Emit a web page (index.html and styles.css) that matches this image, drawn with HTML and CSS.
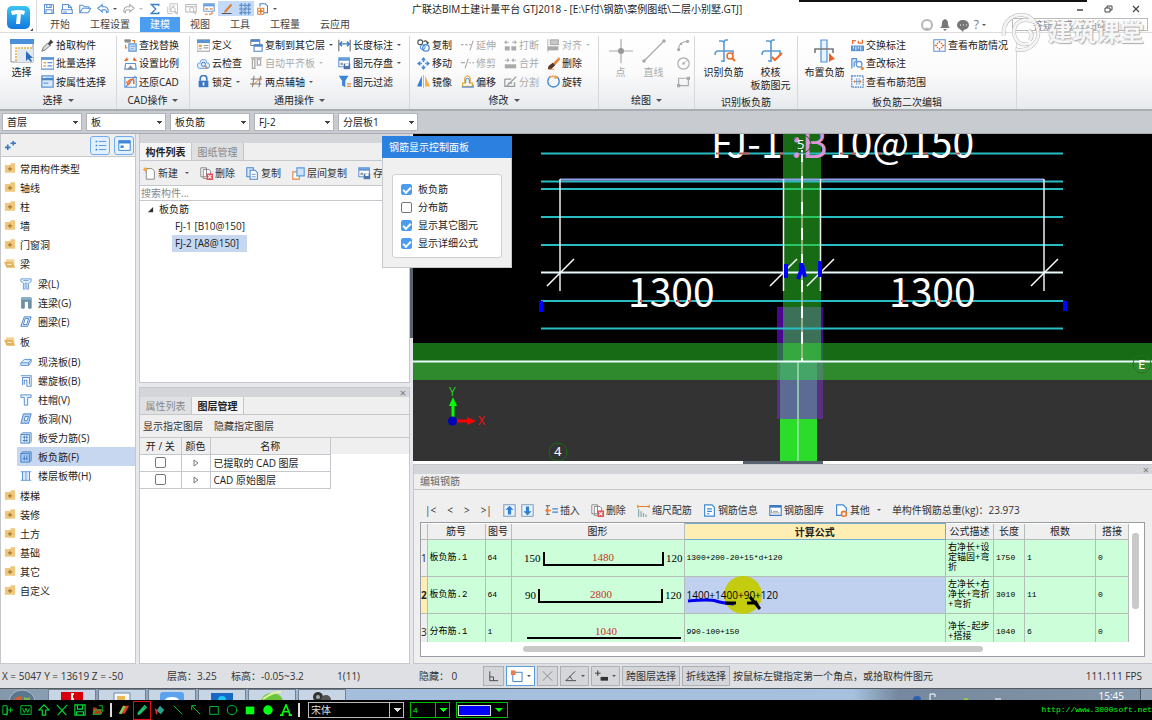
FILE: index.html
```html
<!DOCTYPE html>
<html lang="zh-CN">
<head>
<meta charset="utf-8">
<meta name="viewport" content="width=device-width, initial-scale=1">
<title>广联达BIM土建计量平台 GTJ2018</title>
<link rel="stylesheet" href="styles.css">
</head>
<body>
<!-- icon sprite -->
<svg class="sprite" aria-hidden="true">
	<symbol id="save" viewBox="0 0 16 16"><path d="M2 2h11l1 1v11H2zM5 2v4h6V2M4 14V9h8v5M9 3v2" fill="none" stroke="#5b93d6" stroke-width="1.4"/></symbol>
	<symbol id="saveas" viewBox="0 0 16 16"><path d="M2 9V2h8l4 4v3M10 2v4h4M1 9h14v5H1zM3 12h5" fill="none" stroke="#5b93d6" stroke-width="1.4"/></symbol>
	<symbol id="open" viewBox="0 0 16 16"><path d="M1 13V3h4l2 2h6v3M1 13l4-6h11l-4 6z" fill="none" stroke="#5b93d6" stroke-width="1.4"/></symbol>
	<symbol id="undo" viewBox="0 0 16 16"><path d="M1 7l6-5v3h4q4 1 4 7l-2 1q0-4-3-4H7v3z" fill="none" stroke="#4a8fd8" stroke-width="1.4"/></symbol>
	<symbol id="redo" viewBox="0 0 16 16"><path d="M15 7L9 2v3H5Q1 6 1 12l2 1q0-4 3-4h3v3z" fill="none" stroke="#aaa" stroke-width="1.4"/></symbol>
	<symbol id="sum" viewBox="0 0 16 16"><path d="M13 4V2H3l6 6-6 6h10v-2" fill="none" stroke="#3b7fcb" stroke-width="1.8"/></symbol>
	<symbol id="findgray" viewBox="0 0 16 16"><path d="M4 12V1h10v12h-4M1 5v9h6M6 4h5" fill="none" stroke="#bbb" stroke-width="1.2"/><circle cx="8" cy="9" r="3" fill="none" stroke="#bbb" stroke-width="1.3"/><path d="M10 11l4 4" stroke="#bbb" stroke-width="1.5"/></symbol>
	<symbol id="tblgray" viewBox="0 0 16 16"><path d="M1 2h14v10H1zM1 5h14" fill="none" stroke="#bbb" stroke-width="1.4"/><circle cx="9" cy="9" r="3" fill="#fff" stroke="#bbb" stroke-width="1.3"/><path d="M11 11l4 4" stroke="#bbb" stroke-width="1.5"/></symbol>
	<symbol id="report" viewBox="0 0 16 16"><path d="M1 1h14v10H1z" fill="#fff" stroke="#6aa0dc" stroke-width="1.4"/><path d="M1 3h14" stroke="#6aa0dc" stroke-width="3"/><path d="M3 8h4M9 8h4M3 15h3M8 15h3M12 12v3" stroke="#e9935a" stroke-width="2"/></symbol>
	<symbol id="pen" viewBox="0 0 16 16"><path d="M13 1L5 10l-1 3 3-1 8-9z" fill="#e07b28"/><path d="M1 14h13" stroke="#555" stroke-width="1.4"/></symbol>
	<symbol id="grid" viewBox="0 0 16 16"><path d="M0 3h16M0 8h16M0 13h16M3 0v16M8 0v16M13 0v16" stroke="#4f80bc" stroke-width="1.2"/><path d="M1 15L15 1" stroke="#4f80bc" stroke-width=".8"/></symbol>
	<symbol id="docplus" viewBox="0 0 16 16"><path d="M4 5V1h7l3 3v9H9" fill="none" stroke="#4a7fc0" stroke-width="1.4"/><path d="M1 7h8v8H1z" fill="#fff" stroke="#e07b28" stroke-width="1.4"/><path d="M5 8v6M2 11h6" stroke="#e07b28" stroke-width="2"/></symbol>
	<symbol id="pick" viewBox="0 0 16 16"><path d="M1 15l2-5 5-5 3 3-5 5z" fill="#d7dadd" stroke="#777" stroke-width="1.2"/><path d="M9 5l3 3M10 5l2-3 2 2-3 2z" fill="#333" stroke="#444" stroke-width="1.6"/></symbol>
	<symbol id="batch" viewBox="0 0 16 16"><path d="M0 1h16v14H0z" fill="#fff" stroke="#5a93d6" stroke-width="1.5"/><path d="M0 2h16" stroke="#5a93d6" stroke-width="3"/><path d="M3 7h3M3 11h3" stroke="#eea33b" stroke-width="2"/><path d="M8 7h6M8 11h6" stroke="#5a93d6" stroke-width="1.4"/></symbol>
	<symbol id="prop" viewBox="0 0 16 16"><path d="M1 1h14v14H1z" fill="#d9e9fb" stroke="#5a93d6" stroke-width="1.5"/><path d="M1 5h14" stroke="#4a86cc" stroke-width="3"/><path d="M3 10h6" stroke="#5a93d6" stroke-width="1.4"/><path d="M4 2v2" stroke="#fff"/></symbol>
	<symbol id="swap" viewBox="0 0 16 16"><path d="M1 1h7v2H1zM1 4h7" fill="#888" stroke="#888"/><path d="M10 2h3v3M2 7v4h2" fill="none" stroke="#e07b28" stroke-width="1.4"/><path d="M6 6h9v9H6z" fill="#cfe2f7" stroke="#5a93d6" stroke-width="1.4"/><path d="M8 9h6M8 12h4" stroke="#5a93d6"/></symbol>
	<symbol id="scale" viewBox="0 0 16 16"><path d="M4 0v5H0zM12 0v5h4z" fill="#ec6a2a"/><path d="M2 3h3M11 3h3" stroke="#ec6a2a" stroke-width="2"/><path d="M2 8h12l1 7H1z" fill="#fff" stroke="#5a93d6" stroke-width="1.4"/><path d="M4 15l4-5 4 5" fill="#888"/></symbol>
	<symbol id="restore" viewBox="0 0 16 16"><path d="M1 2v13h14V2M0 3h16M2 15L14 1" fill="none" stroke="#5a93d6" stroke-width="1.3"/><path d="M5 9q2-5 7-3v5M3 8l2 4 3-3" fill="none" stroke="#ec6a2a" stroke-width="1.8"/></symbol>
	<symbol id="define" viewBox="0 0 16 16"><path d="M0 1h16v14H0z" fill="#fff" stroke="#999" stroke-width="1.2"/><path d="M0 3h16" stroke="#5a93d6" stroke-width="4"/><path d="M2 7h4v3H2z" fill="#f0a04a"/><path d="M8 8h6M8 11h6M2 12h4" stroke="#999" stroke-width="1.4"/></symbol>
	<symbol id="cloud" viewBox="0 0 16 16"><path d="M4 14a3.5 3.5 0 010-7 4 4 0 018 0 3.500 3.500 0 010 7z" fill="#e4f0fd" stroke="#7dabdf" stroke-width="1.3"/><circle cx="8" cy="9" r="2.500" fill="none" stroke="#3b78c2" stroke-width="1.2"/><path d="M10 11l3 3" stroke="#e07b28" stroke-width="1.6"/></symbol>
	<symbol id="lock" viewBox="0 0 16 16"><path d="M4 7V4a4 3.500 0 018 0v3" fill="none" stroke="#3b78c2" stroke-width="2"/><path d="M2 7h12v8H2z" fill="#3b78c2"/><path d="M8 9v4" stroke="#fff" stroke-width="2"/></symbol>
	<symbol id="layers" viewBox="0 0 16 16"><path d="M1 1h11v7H1z" fill="#fff" stroke="#777" stroke-width="1.2"/><path d="M1 2h11" stroke="#4a86cc" stroke-width="3"/><path d="M5 7h10v8H5z" fill="#fff" stroke="#4a86cc" stroke-width="1.3"/><path d="M5 8h10" stroke="#4a86cc" stroke-width="3"/></symbol>
	<symbol id="flush" viewBox="0 0 16 16"><path d="M1 1h14M3 3h3v11H3zM9 3h4v7H9z" fill="none" stroke="#aaa" stroke-width="1.6"/></symbol>
	<symbol id="axis" viewBox="0 0 16 16"><path d="M5 1L3 15M13 1l-2 14M1 5h14M0 11h14" stroke="#777" stroke-width="1.2"/><path d="M3 13L14 3" stroke="#e07b28" stroke-width="1.2"/></symbol>
	<symbol id="length" viewBox="0 0 16 16"><path d="M1 1v14M15 1v14" stroke="#777" stroke-width="1.5"/><path d="M3 6h10M5 3L2 6l3 3M11 3l3 3-3 3" fill="none" stroke="#3b78c2" stroke-width="1.6"/></symbol>
	<symbol id="store" viewBox="0 0 16 16"><path d="M1 1h13v11H1z" fill="#fff" stroke="#5a93d6" stroke-width="1.3"/><path d="M1 3h13" stroke="#5a93d6" stroke-width="3"/><path d="M3 7h3v3H3z" fill="#999"/><path d="M7 8h8v7H7z" fill="#4f75a8"/><path d="M9 8h4v3H9z" fill="#fff"/></symbol>
	<symbol id="filter" viewBox="0 0 16 16"><path d="M1 1h12L9 7v8l-4-2V7z" fill="#3b86d6"/><path d="M11 11h5M11 14h5" stroke="#eb8a35" stroke-width="1.6"/></symbol>
	<symbol id="copyobj" viewBox="0 0 16 16"><circle cx="4" cy="4" r="3" fill="none" stroke="#555" stroke-width="1.4"/><path d="M8 3q4-2 5 2" fill="none" stroke="#444" stroke-width="1.4"/><path d="M11 4l2 3 2-3z" fill="#444"/><circle cx="11" cy="11" r="4" fill="none" stroke="#3b86d6" stroke-width="1.5"/><circle cx="7" cy="10" r="3" fill="none" stroke="#3b86d6" stroke-width="1.2"/></symbol>
	<symbol id="move" viewBox="0 0 16 16"><path d="M8 0l3 4H5zM8 16l3-4H5zM0 8l4-3v6zM16 8l-4-3v6z" fill="#3b86d6"/><path d="M8 4v2M8 10v2M4 8h2M10 8h2" stroke="#3b86d6" stroke-width="2"/></symbol>
	<symbol id="mirror" viewBox="0 0 16 16"><path d="M6 1v13H0z" fill="#2f7fd4"/><path d="M10 1v13h6z" fill="#f6b13e"/><path d="M8 0v16" stroke="#aaa"/></symbol>
	<symbol id="extend" viewBox="0 0 16 16"><path d="M0 7h3M5 7h3M10 7h2M11 14l4-12" stroke="#aaa" stroke-width="1.4"/></symbol>
	<symbol id="trim" viewBox="0 0 16 16"><path d="M0 7h5M10 7h2M14 7h2M5 14L9 2" stroke="#aaa" stroke-width="1.4"/></symbol>
	<symbol id="offset" viewBox="0 0 16 16"><path d="M2 14v-4h3q-2-8 3-9 5 1 3 9h3v4z" fill="#fff" stroke="#e2a634" stroke-width="1.4"/><path d="M1 15h14v-3M6 10q-1-6 2-6t2 6" fill="none" stroke="#5a93d6" stroke-width="1.4"/></symbol>
	<symbol id="breakit" viewBox="0 0 16 16"><path d="M1 9h6v5H1zM9 9h6v5H9z" fill="#aaa"/><path d="M1 4h5M10 4h5M3 2L1 4l2 2M13 2l2 2-2 2" fill="none" stroke="#aaa" stroke-width="1.3"/></symbol>
	<symbol id="merge" viewBox="0 0 16 16"><path d="M1 9h14v5H1z" fill="#aaa"/><path d="M1 4h5M10 4h5M4 2l2 2-2 2M12 2l-2 2 2 2" fill="none" stroke="#aaa" stroke-width="1.3"/></symbol>
	<symbol id="split" viewBox="0 0 16 16"><path d="M1 5h8M1 5v9h12V9M3 14l12-12M5 10h5" fill="none" stroke="#999" stroke-width="1.500"/></symbol>
	<symbol id="align" viewBox="0 0 16 16"><path d="M4 1h10v6H4z" fill="#c8c8c8" stroke="#999"/><path d="M1 9h13v5H1z" fill="#aaa"/><path d="M1 0v16" stroke="#aaa"/></symbol>
	<symbol id="eraser" viewBox="0 0 16 16"><path d="M15 0L7 8l2 3 7-8z" fill="#e9812c"/><path d="M7 7l3 3-5 5H1l1-4z" fill="#553526"/><path d="M3 15h6" stroke="#e9812c"/></symbol>
	<symbol id="rotate" viewBox="0 0 16 16"><path d="M12 2a7 7 0 11-8 0" fill="none" stroke="#3b86d6" stroke-width="1.6"/><path d="M3 3q4-3 8 0" fill="none" stroke="#f0a04a" stroke-width="1.8"/><path d="M10 0l4 4-5 1z" fill="#f0a04a"/></symbol>
	<symbol id="arc" viewBox="0 0 16 16"><path d="M2 13Q2 3 13 3" fill="none" stroke="#aaa" stroke-width="1.3"/><circle cx="2" cy="13" r="2" fill="#aaa"/><circle cx="13" cy="3" r="2" fill="#aaa"/><circle cx="5" cy="6" r="1.500" fill="#aaa"/></symbol>
	<symbol id="circle" viewBox="0 0 16 16"><circle cx="8" cy="8" r="7" fill="none" stroke="#aaa" stroke-width="1.400"/><circle cx="8" cy="8" r="1.500" fill="#aaa"/><path d="M8 8l5-4" stroke="#aaa"/></symbol>
	<symbol id="rect" viewBox="0 0 16 16"><path d="M2 4h12v9H2z" fill="none" stroke="#aaa" stroke-width="1.400"/><path d="M0 11h4v4H0zM12 2h4v4h-4z" fill="#aaa"/></symbol>
	<symbol id="bigsel" viewBox="0 0 24 24"><path d="M1 1h22v22H1z" fill="#fff" stroke="#8f9499"/><path d="M0 0h24v5H0z" fill="#4a90da"/><path d="M6 22V9h17" fill="none" stroke="#e9a63e" stroke-width="1.500" stroke-dasharray="2 1"/><path d="M7 10h16v13H7z" fill="#e0e9f4"/><path d="M16 12v10l2-2 3 3 1-1-2-3h3z" fill="#2e6db8"/></symbol>
	<symbol id="point" viewBox="0 0 24 24"><path d="M12 0v24M0 12h24" stroke="#aaa" stroke-width="1.200"/><circle cx="12" cy="12" r="3" fill="#999"/></symbol>
	<symbol id="line" viewBox="0 0 24 24"><path d="M2 22L22 2" stroke="#aaa" stroke-width="1.200"/><circle cx="2" cy="22" r="1.800" fill="#aaa"/><circle cx="22" cy="2" r="1.800" fill="#aaa"/></symbol>
	<symbol id="recog" viewBox="0 0 24 24"><path d="M7 2h3q2 0 2 3v18M12 22h-3M16 1h-2q-2 0-2 3M3 16q0-4 3-4h15v3" fill="none" stroke="#5a9ad8" stroke-width="1.600"/><circle cx="18" cy="17" r="3" fill="#fff" stroke="#ec6a2a" stroke-width="1.600"/><path d="M20 19l3 3" stroke="#ec6a2a" stroke-width="2"/></symbol>
	<symbol id="verify" viewBox="0 0 24 24"><path d="M7 2h3q2 0 2 3v18M12 22h-3M16 1h-2q-2 0-2 3M3 16q0-4 3-4h15v3" fill="none" stroke="#5a9ad8" stroke-width="1.600"/><path d="M13 18l3 3 7-7" fill="none" stroke="#ec6a2a" stroke-width="2"/></symbol>
	<symbol id="place" viewBox="0 0 24 24"><path d="M8 1h6v22H8z" fill="#e6f2fe" stroke="#4d94dc" stroke-width="1.200"/><path d="M2 14v-4h18v4" fill="none" stroke="#777" stroke-width="1.600"/><path d="M16 14l6 6-3 1-3 2z" fill="#ec5f22"/></symbol>
	<symbol id="exch" viewBox="0 0 16 16"><path d="M2 6V2h4M9 2v3h5V1" fill="none" stroke="#ec6a2a" stroke-width="1.500"/><path d="M0 8h16v7H0z" fill="#5a93d6"/><path d="M3 9v3M6 9v5M9 9v3M12 9v5" stroke="#fff"/></symbol>
	<symbol id="fixnote" viewBox="0 0 16 16"><path d="M1 14V2h6v3L4 7v5" fill="#cfe2f7" stroke="#5a93d6" stroke-width="1.400"/><circle cx="10" cy="9" r="3.500" fill="#fff" stroke="#5a93d6" stroke-width="1.500"/><circle cx="14" cy="14" r="2" fill="#eb8a35"/></symbol>
	<symbol id="range" viewBox="0 0 16 16"><path d="M1 1h14v14H1z" fill="none" stroke="#3b78c2" stroke-width="1.400" stroke-dasharray="2 1"/><path d="M4 8h8M7 4v8M10 4v8" stroke="#5a93d6"/><path d="M3 8l2-2v4zM13 8l-2-2v4z" fill="#e07b28"/></symbol>
	<symbol id="status" viewBox="0 0 16 16"><path d="M1 1h14v14H1z" fill="#fff" stroke="#5a93d6" stroke-width="1.300"/><path d="M8 2v3M8 11v3M2 8h3M11 8h3M5 5l1 1M11 5l-1 1M5 11l1-1M11 11l-1-1" fill="none" stroke="#ec6a2a" stroke-width="1.800"/></symbol>
	<symbol id="folder" viewBox="0 0 14 12"><path d="M1 2h6l1-2h5v11H1z" fill="#efc880"/><path d="M7 4v5M4.500 6.500h5" stroke="#a8752a" stroke-width="1.300"/></symbol>
	<symbol id="folderopen" viewBox="0 0 14 12"><path d="M2 1h10v8H4z" fill="#f2d79d"/><path d="M0 4h10l3 7H3z" fill="#e5b25a"/><path d="M4 7h5" stroke="#fff"/></symbol>
	<symbol id="beam" viewBox="0 0 14 14"><path d="M1 1h12v3l-3 2v7H8V6H6v7H4V6L1 4z" fill="#e8f3fe" stroke="#5a93d6"/><path d="M4 3h6" stroke="#5a93d6"/></symbol>
	<symbol id="lbeam" viewBox="0 0 14 14"><path d="M2 1h11v12h-3V5H5v8H2z" fill="#6d93ad" stroke="#5e7f98"/><path d="M2 2h11" stroke="#8db6d2" stroke-width="2"/></symbol>
	<symbol id="ring" viewBox="0 0 14 14"><path fill-rule="evenodd" d="M5 1h8L9 12H1zM6 3h4l-2 7H4z" fill="#dcecfc" stroke="#3b78c2"/></symbol>
	<symbol id="slab" viewBox="0 0 14 14"><path d="M1 8l4-4h8l-3 4zM1 8v3h9V8M10 11l3-4V4" fill="#dcecfc" stroke="#4a86cc"/></symbol>
	<symbol id="spiral" viewBox="0 0 14 14"><path d="M1 1h12v12H8V6H5v5M3 12V3h8v8" fill="none" stroke="#5a93d6" stroke-width="1.200"/></symbol>
	<symbol id="cap" viewBox="0 0 14 14"><path d="M1 1h12v3H9v9H5V4H1z" fill="#e8f3fe" stroke="#4a86cc"/></symbol>
	<symbol id="hole" viewBox="0 0 14 14"><path d="M4 1h9l-3 11H1z" fill="#b9d6f5" stroke="#3b78c2"/><path d="M6 4h4L8 9H5z" fill="#fff" stroke="#3b78c2"/></symbol>
	<symbol id="rebar" viewBox="0 0 14 14"><path d="M1 3l2-2h10v10l-2 2H1zM1 3h10v10M3 6h6M3 10h6M5 4v8M8 4v8" fill="#e8f3fe" stroke="#3b78c2"/></symbol>
	<symbol id="negbar" viewBox="0 0 14 14"><path d="M1 3l2-2h10v10l-2 2H1zM1 3h10v10M3 9h6M5 5v6M8 5v6" fill="#a9cbf3" stroke="#3b78c2"/></symbol>
	<symbol id="band" viewBox="0 0 14 14"><path d="M1 2h12M1 12h12M3 2v10M7 2v10M11 2v10" stroke="#5a93d6" stroke-width="1.300"/><path d="M4 3h2v8H4zM8 3h2v8H8z" fill="#d5e6f9"/></symbol>
	<symbol id="new" viewBox="0 0 16 16"><path d="M4 2h7l3 3v10H4z" fill="#fff" stroke="#888" stroke-width="1.200"/><path d="M3 0v6M0 3h6M1 1l4 4M5 1L1 5" stroke="#f0a53e" stroke-width="1.200"/></symbol>
	<symbol id="del" viewBox="0 0 16 16"><path d="M1 1h7v11H1zM4 3h7l2 2v9H4z" fill="#fff" stroke="#888" stroke-width="1.200"/><path d="M8 8h8v8H8z" fill="#e2515a"/><path d="M10 10l4 4M14 10l-4 4" stroke="#fff" stroke-width="1.400"/></symbol>
	<symbol id="copy" viewBox="0 0 16 16"><path d="M1 1h8v11H1z" fill="#d9e9fb" stroke="#4a86cc" stroke-width="1.300"/><path d="M5 4h6l3 3v8H5z" fill="#fff" stroke="#4a86cc" stroke-width="1.300"/><path d="M7 9h5M7 12h5" stroke="#4a86cc"/></symbol>
	<symbol id="floorcopy" viewBox="0 0 16 16"><path d="M1 6h8v9H1z" fill="#fff" stroke="#e0854a" stroke-width="1.400"/><path d="M6 1h9v10H6z" fill="#cfe4fb" stroke="#5a9ade" stroke-width="1.400"/></symbol>
	<symbol id="up" viewBox="0 0 16 16"><path d="M1 1h14v14H1z" fill="#eef5fd" stroke="#7a9cc0" stroke-width="1.300"/><path d="M8 2l5 5h-3v6H6V7H3z" fill="#2f7fd4"/></symbol>
	<symbol id="down" viewBox="0 0 16 16"><path d="M1 1h14v14H1z" fill="#eef5fd" stroke="#7a9cc0" stroke-width="1.300"/><path d="M8 14l5-5h-3V3H6v6H3z" fill="#2f7fd4"/></symbol>
	<symbol id="insert" viewBox="0 0 16 16"><path d="M1 2h5M1 13h5M3 2v3M3 10v3" stroke="#777" stroke-width="1.300"/><path d="M0 8l4-4v3h3v2H4v3z" fill="#ec7a2a"/><path d="M9 6h7M9 10h7" stroke="#3b86d6" stroke-width="1.600"/></symbol>
	<symbol id="ruler" viewBox="0 0 16 16"><path d="M1 1v4M1 3h14M15 1v4" stroke="#ec7a2a" stroke-width="1.300"/><path d="M2 6v10M5 9v7M8 11v5M11 13v3" stroke="#8aa" stroke-width="1.500"/></symbol>
	<symbol id="info" viewBox="0 0 16 16"><path d="M2 1h9l3 3v11H2z" fill="#fff" stroke="#3b86d6" stroke-width="1.400"/><path d="M5 6h6M5 9h6M5 12h3" stroke="#3b86d6" stroke-width="1.500"/></symbol>
	<symbol id="lib" viewBox="0 0 16 16"><path d="M1 2h14v12H1z" fill="#fff" stroke="#3b78c2" stroke-width="1.300"/><path d="M1 3h14" stroke="#3b78c2" stroke-width="3"/><path d="M3 7v4h10M5 9h6" fill="none" stroke="#888"/></symbol>
	<symbol id="other" viewBox="0 0 16 16"><path d="M2 1h8l4 4v9H2z" fill="#fff" stroke="#3b86d6" stroke-width="1.400"/><circle cx="11" cy="12" r="3" fill="#fff" stroke="#ec7a2a" stroke-width="2"/></symbol>
</svg>

<header class="top">
	<button class="logo" aria-label="菜单">
		<svg viewBox="0 0 36 32">
			<defs><linearGradient id="lg" x1="0" y1="0" x2="0" y2="1"><stop offset="0" stop-color="#3cc4f5"/><stop offset="1" stop-color="#1278dc"/></linearGradient></defs>
			<rect x="7" y="6" width="23" height="23" rx="5" fill="url(#lg)"/>
			<path d="M11 11q8-2 14 0l-1 4-3-1-1 10h-4l1-10-5 1z" fill="#fff"/>
			<path d="M30 31h3v-3z" fill="#555"/>
		</svg>
	</button>
	<div class="topmain">
		<div class="titlerow">
			<div class="quick">
				<button aria-label="保存"><svg><use href="#save"/></svg></button>
				<button aria-label="另存"><svg><use href="#saveas"/></svg></button>
				<button aria-label="打开"><svg><use href="#open"/></svg></button>
				<button aria-label="撤销" class="drop"><svg><use href="#undo"/></svg></button>
				<button aria-label="恢复" class="drop dis"><svg><use href="#redo"/></svg></button>
				<button aria-label="汇总"><svg><use href="#sum"/></svg></button>
				<button aria-label="查找"><svg><use href="#findgray"/></svg></button>
				<button aria-label="查看"><svg><use href="#tblgray"/></svg></button>
				<button aria-label="报表"><svg><use href="#report"/></svg></button>
				<button aria-label="绘制" class="on"><svg><use href="#pen"/></svg></button>
				<button aria-label="轴网" class="on"><svg><use href="#grid"/></svg></button>
				<button aria-label="新增" class="drop"><svg><use href="#docplus"/></svg></button>
			</div>
			<h1>广联达BIM土建计量平台 GTJ2018 - [E:\F付\钢筋\案例图纸\二层小别墅.GTJ]</h1>
			<div class="winbtns">
				<button aria-label="最小化"><svg viewBox="0 0 10 10"><path d="M2 6h6" stroke="#444" stroke-width="1.500"/></svg></button>
				<button aria-label="还原"><svg viewBox="0 0 10 10"><path d="M2 4h5v4H2zM4 4V2h5v4H7" fill="none" stroke="#444"/></svg></button>
				<button aria-label="关闭"><svg viewBox="0 0 10 10"><path d="M2 2l6 6M8 2L2 8" stroke="#444" stroke-width="1.200"/></svg></button>
			</div>
		</div>
		<div class="tabrow">
			<nav class="menu">
				<a href="#">开始</a><a href="#">工程设置</a><a href="#" class="active">建模</a><a href="#">视图</a><a href="#">工具</a><a href="#">工程量</a><a href="#">云应用</a>
			</nav>
			<div class="helpers">
				<svg viewBox="0 0 14 14"><circle cx="7" cy="7" r="5" fill="none" stroke="#b5b5b5" stroke-width="2"/><path d="M3 12q4-5 8 0z" fill="#b5b5b5"/></svg>
				<svg viewBox="0 0 14 14"><path d="M2 10q2-1 2-5 0-3 3-4 3 1 3 4 0 4 2 5zM5 11h4l-2 2z" fill="#777"/></svg>
				<svg viewBox="0 0 14 14"><ellipse cx="7" cy="7" rx="6" ry="5" fill="#777"/><path d="M4 11l3 3 1-3z" fill="#777"/><path d="M4 7h1M7 7h1M10 7h1" stroke="#fff"/></svg>
				<button class="help drop">?</button>
				<input type="text" class="search" aria-label="搜索" placeholder="答疑解惑/搜功能">
			</div>
		</div>
	</div>
	<div class="edge"></div>
	<div class="mark">
		<svg viewBox="0 0 44 44"><path d="M37 12Q28 1 16 5 2 11 4 26M37 12Q24 6 17 14q-5 8 0 16 5 7 13 4M30 20q6 5 1 11M38 14q5 12-2 20-8 9-20 6" fill="none" stroke="#b5b5b5" stroke-width="4"/><path d="M37 12Q28 1 16 5 2 11 4 26M37 12Q24 6 17 14q-5 8 0 16 5 7 13 4M30 20q6 5 1 11M38 14q5 12-2 20-8 9-20 6" fill="none" stroke="#f4f4f4" stroke-width="3"/></svg>
		<span>建筑课堂</span>
	</div>
</header>

<section class="ribbon">
	<div class="group g-select">
		<div class="body">
			<button class="big"><svg><use href="#bigsel"/></svg><span>选择</span></button>
			<div class="tools">
				<button><svg><use href="#pick"/></svg>拾取构件</button>
				<button><svg><use href="#batch"/></svg>批量选择</button>
				<button><svg><use href="#prop"/></svg>按属性选择</button>
			</div>
		</div>
		<p class="drop">选择</p>
	</div>
	<div class="group g-cad">
		<div class="body"><div class="tools">
			<button><svg><use href="#swap"/></svg>查找替换</button>
			<button><svg><use href="#scale"/></svg>设置比例</button>
			<button><svg><use href="#restore"/></svg>还原CAD</button>
		</div></div>
		<p class="drop">CAD操作</p>
	</div>
	<div class="group g-common">
		<div class="body"><div class="tools">
			<button><svg><use href="#define"/></svg>定义</button>
			<button><svg><use href="#cloud"/></svg>云检查</button>
			<button class="drop"><svg><use href="#lock"/></svg>锁定</button>
			<button class="drop"><svg><use href="#layers"/></svg>复制到其它层</button>
			<button class="drop dis"><svg><use href="#flush"/></svg>自动平齐板</button>
			<button class="drop"><svg><use href="#axis"/></svg>两点辅轴</button>
			<button class="drop"><svg><use href="#length"/></svg>长度标注</button>
			<button class="drop"><svg><use href="#store"/></svg>图元存盘</button>
			<button><svg><use href="#filter"/></svg>图元过滤</button>
		</div></div>
		<p class="drop">通用操作</p>
	</div>
	<div class="group g-modify">
		<div class="body"><div class="tools">
			<button><svg><use href="#copyobj"/></svg>复制</button>
			<button><svg><use href="#move"/></svg>移动</button>
			<button><svg><use href="#mirror"/></svg>镜像</button>
			<button class="dis"><svg><use href="#extend"/></svg>延伸</button>
			<button class="dis"><svg><use href="#trim"/></svg>修剪</button>
			<button><svg><use href="#offset"/></svg>偏移</button>
			<button class="dis"><svg><use href="#breakit"/></svg>打断</button>
			<button class="dis"><svg><use href="#merge"/></svg>合并</button>
			<button class="dis"><svg><use href="#split"/></svg>分割</button>
			<button class="drop dis"><svg><use href="#align"/></svg>对齐</button>
			<button><svg><use href="#eraser"/></svg>删除</button>
			<button><svg><use href="#rotate"/></svg>旋转</button>
		</div></div>
		<p class="drop">修改</p>
	</div>
	<div class="group g-draw">
		<div class="body">
			<button class="big dis"><svg><use href="#point"/></svg><span>点</span></button>
			<button class="big dis"><svg><use href="#line"/></svg><span>直线</span></button>
			<div class="tools">
				<button aria-label="弧"><svg><use href="#arc"/></svg></button>
				<button aria-label="圆"><svg><use href="#circle"/></svg></button>
				<button aria-label="矩形"><svg><use href="#rect"/></svg></button>
			</div>
		</div>
		<p class="drop">绘图</p>
	</div>
	<div class="group g-recog">
		<div class="body">
			<button class="big"><svg><use href="#recog"/></svg><span>识别负筋</span></button>
			<button class="big"><svg><use href="#verify"/></svg><span>校核<br>板筋图元</span></button>
		</div>
		<p>识别板负筋</p>
	</div>
	<div class="group g-edit">
		<div class="body">
			<button class="big"><svg><use href="#place"/></svg><span>布置负筋</span></button>
			<div class="tools">
				<button><svg><use href="#exch"/></svg>交换标注</button>
				<button><svg><use href="#fixnote"/></svg>查改标注</button>
				<button><svg><use href="#range"/></svg>查看布筋范围</button>
				<button><svg><use href="#status"/></svg>查看布筋情况</button>
			</div>
		</div>
		<p>板负筋二次编辑</p>
	</div>
</section>

<div class="selectors">
	<select aria-label="楼层"><option>首层</option></select>
	<select aria-label="类型"><option>板</option></select>
	<select aria-label="构件类型"><option>板负筋</option></select>
	<select aria-label="构件"><option>FJ-2</option></select>
	<select aria-label="分层"><option>分层板1</option></select>
</div>

<main class="work">
	<aside class="nav">
		<div class="navhead">
			<svg class="plus" viewBox="0 0 12 12"><path d="M3 5v6M0 8h6M9 1v5M6 3.500h6" stroke="#3b78c2" stroke-width="1.800"/></svg>
			<button aria-label="列表"><svg viewBox="0 0 16 16"><path d="M2 3h2M2 8h2M2 13h2" stroke="#3b86d6" stroke-width="2"/><path d="M6 3h9M6 8h9M6 13h9" stroke="#3b86d6"/></svg></button>
			<button aria-label="面板"><svg viewBox="0 0 16 16"><path d="M1 2h14v12H1z" fill="#fff" stroke="#3b86d6" stroke-width="1.200"/><path d="M1 4h14" stroke="#3b86d6" stroke-width="3"/><path d="M3 8h4v3H3z" fill="#3b86d6"/></svg></button>
		</div>
		<ul class="types">
			<li><svg><use href="#folder"/></svg>常用构件类型</li>
			<li><svg><use href="#folder"/></svg>轴线</li>
			<li><svg><use href="#folder"/></svg>柱</li>
			<li><svg><use href="#folder"/></svg>墙</li>
			<li><svg><use href="#folder"/></svg>门窗洞</li>
			<li><svg><use href="#folderopen"/></svg>梁</li>
			<li class="sub"><ul>
				<li><svg><use href="#beam"/></svg>梁(L)</li>
				<li><svg><use href="#lbeam"/></svg>连梁(G)</li>
				<li><svg><use href="#ring"/></svg>圈梁(E)</li>
			</ul></li>
			<li><svg><use href="#folderopen"/></svg>板</li>
			<li class="sub"><ul>
				<li><svg><use href="#slab"/></svg>现浇板(B)</li>
				<li><svg><use href="#spiral"/></svg>螺旋板(B)</li>
				<li><svg><use href="#cap"/></svg>柱帽(V)</li>
				<li><svg><use href="#hole"/></svg>板洞(N)</li>
				<li><svg><use href="#rebar"/></svg>板受力筋(S)</li>
				<li class="current"><svg><use href="#negbar"/></svg>板负筋(F)</li>
				<li><svg><use href="#band"/></svg>楼层板带(H)</li>
			</ul></li>
			<li><svg><use href="#folder"/></svg>楼梯</li>
			<li><svg><use href="#folder"/></svg>装修</li>
			<li><svg><use href="#folder"/></svg>土方</li>
			<li><svg><use href="#folder"/></svg>基础</li>
			<li><svg><use href="#folder"/></svg>其它</li>
			<li><svg><use href="#folder"/></svg>自定义</li>
		</ul>
	</aside>

	<div class="middle">
		<section class="panel list">
			<div class="grip"></div>
			<div class="tabs"><button class="active">构件列表</button><button>图纸管理</button></div>
			<div class="bar">
				<button class="drop"><svg><use href="#new"/></svg>新建</button>
				<button><svg><use href="#del"/></svg>删除</button>
				<button><svg><use href="#copy"/></svg>复制</button>
				<button><svg><use href="#floorcopy"/></svg>层间复制</button>
				<button><svg><use href="#store"/></svg>存档</button>
			</div>
			<input type="text" class="find" aria-label="搜索构件" placeholder="搜索构件...">
			<ul class="tree">
				<li><svg viewBox="0 0 8 8"><path d="M7 1v6H1z" fill="#333"/></svg>板负筋
					<ul>
						<li>FJ-1 [B10@150]</li>
						<li class="current">FJ-2 [A8@150]</li>
					</ul>
				</li>
			</ul>
		</section>
		<section class="panel layers">
			<div class="grip"><button aria-label="关闭">×</button></div>
			<div class="tabs"><button>属性列表</button><button class="active">图层管理</button></div>
			<div class="bar text"><button>显示指定图层</button><button>隐藏指定图层</button></div>
			<div class="layerbox">
				<table>
					<colgroup><col class="c-on"><col class="c-col"><col class="c-name"></colgroup>
					<thead><tr><th>开 / 关</th><th>颜色</th><th>名称</th></tr></thead>
					<tbody>
						<tr><td><input type="checkbox" aria-label="已提取的 CAD 图层"></td><td><svg viewBox="0 0 8 8"><path d="M2 1l4 3-4 3z" fill="none" stroke="#777"/></svg></td><td>已提取的 CAD 图层</td></tr>
						<tr><td><input type="checkbox" aria-label="CAD 原始图层"></td><td><svg viewBox="0 0 8 8"><path d="M2 1l4 3-4 3z" fill="none" stroke="#777"/></svg></td><td>CAD 原始图层</td></tr>
					</tbody>
				</table>
			</div>
		</section>
	</div>
	<div class="vsplit"><i></i></div>

	<div class="right">
		<svg class="cad" viewBox="413 134 739 327" preserveAspectRatio="xMidYMid slice">
			<rect x="413" y="134" width="739" height="246" fill="#000"/>
			<rect x="413" y="380" width="739" height="82" fill="#333"/>
			<rect x="413" y="343" width="739" height="18" fill="#176b14"/>
			<rect x="413" y="361" width="739" height="19" fill="#2f8a2e"/>
			<rect x="783" y="134" width="38" height="173" fill="#176b14"/>
			<rect x="777" y="307" width="46" height="36" fill="#4b0590"/>
			<rect x="783" y="307" width="38" height="36" fill="#3d7058"/>
			<rect x="777" y="343" width="46" height="18" fill="#2f6a50"/>
			<rect x="783" y="343" width="38" height="18" fill="#35a93f"/>
			<rect x="777" y="361" width="46" height="19" fill="#4a8461"/>
			<rect x="780" y="361" width="37" height="19" fill="#45a568"/>
			<rect x="777" y="380" width="46" height="39" fill="#59307e"/>
			<rect x="780" y="380" width="37" height="39" fill="#5c6b94"/>
			<rect x="780" y="419" width="37" height="43" fill="#2bdc2b"/>
			<path d="M798 362v100" stroke="#9fe0b0" stroke-width="1.500"/>
			<path d="M541 153.500h522M541 181.500h522M541 189h522M541 217h522M541 245h522M541 301h522M541 328.500h522" stroke="#28bcc4" stroke-width="2"/>
			<path d="M783 217h38M783 245h38M783 189h38" stroke="#28c864" stroke-width="2"/>
			<g class="cadtext">
				<text x="711" y="158">FJ-1</text>
				<text x="791" y="158" fill="#dd92dd">:B</text>
				<text x="829" y="158">10@150</text>
				<text x="628" y="307">1300</text>
				<text x="889" y="307">1300</text>
			</g>
			<path d="M716 153.500h3M739 153.500h10M780 153.500h4M840 153.500h4M852 153.500h4M878 153.500h4M924 153.500h4M956 153.500h4M640 301h4M676 301h4M688 301h4M901 301h4M937 301h4M949 301h4" stroke="#c85a5a" stroke-width="2"/>
			<path d="M560 179.500h484" stroke="#8fa0ee" stroke-width="2"/>
			<path d="M541 272.500h522M413 361.500h739" stroke="#e8fbfb" stroke-width="1.800"/>
			<path d="M560 179v112M1044 179v112M783.500 179v112M820.500 179v112" stroke="#eee" stroke-width="1.500"/>
			<path d="M547 286l27-27M770 286l27-27M807 286l27-27M1031 286l27-27" stroke="#fff" stroke-width="1.500"/>
			<path d="M802 150v211" stroke="#b9c49c" stroke-width="1.500"/>
			<path d="M802 150v211" stroke="#fff" stroke-width="2" stroke-dasharray="12 14"/>
			<path d="M786 264v14M820 261v16M801 263v8l-3 8M802 265l3 12M541 301v11M1065 301v10" fill="none" stroke="#00f" stroke-width="4"/>
			<circle cx="802" cy="144" r="9" fill="none" stroke="#245a24"/>
			<circle cx="558" cy="452" r="9" fill="none" stroke="#176b14"/>
			<circle cx="1142" cy="364" r="9" fill="none" stroke="#257225"/>
			<text x="797" y="149" class="tag">5</text>
			<text x="554" y="456" class="tag">4</text>
			<text x="1138" y="369" class="tag">E</text>
			<path d="M453 420v-14" stroke="#0f0" stroke-width="3"/><path d="M449 406l4-9 4 9z" fill="#0f0"/>
			<path d="M457 421h10" stroke="#f00" stroke-width="3"/><path d="M467 417l9 4-9 4z" fill="#f00"/>
			<circle cx="452.500" cy="421" r="4.500" fill="#0000b8"/>
			<text x="449" y="396" class="axis" fill="#1fd01f">Y</text>
			<text x="478" y="425" class="axis" fill="#f01010">X</text>
		</svg>
		<div class="hsplit"><i></i></div>
		<section class="panel rebar">
			<div class="grip"><button aria-label="关闭">×</button></div>
			<h2>编辑钢筋</h2>
			<div class="bar">
				<button>|&lt;</button><button>&lt;</button><button>&gt;</button><button>&gt;|</button>
				<div class="step">
					<button aria-label="上移"><svg><use href="#up"/></svg></button>
					<button aria-label="下移"><svg><use href="#down"/></svg></button>
				</div>
				<button><svg><use href="#insert"/></svg>插入</button>
				<button><svg><use href="#del"/></svg>删除</button>
				<button><svg><use href="#ruler"/></svg>缩尺配筋</button>
				<button><svg><use href="#info"/></svg>钢筋信息</button>
				<button><svg><use href="#lib"/></svg>钢筋图库</button>
				<button class="drop"><svg><use href="#other"/></svg>其他</button>
				<span>单构件钢筋总重(kg)：23.973</span>
			</div>
			<div class="sheet">
				<div class="rows">
					<table>
						<colgroup><col class="r-no"><col class="r-id"><col class="r-pic"><col class="r-shape"><col><col class="r-desc"><col class="r-len"><col class="r-cnt"><col class="r-lap"></colgroup>
						<thead><tr><th></th><th>筋号</th><th>图号</th><th>图形</th><th class="hot">计算公式</th><th>公式描述</th><th>长度</th><th>根数</th><th>搭接</th></tr></thead>
						<tbody>
							<tr><th>1</th><td class="name">板负筋.1</td><td>64</td>
								<td class="shape"><svg viewBox="0 0 172 36"><path d="M32 12v13h119V12" fill="none" stroke="#000" stroke-width="2"/><text x="12" y="22">150</text><text x="80" y="21" class="red">1480</text><text x="154" y="22">120</text></svg></td>
								<td>1300+200-20+15*d+120</td><td class="desc">右净长+设定锚固+弯折</td><td>1750</td><td>1</td><td>0</td></tr>
							<tr class="sel"><th>2</th><td class="name">板负筋.2</td><td>64</td>
								<td class="shape"><svg viewBox="0 0 172 36"><path d="M27 12v13h123V12" fill="none" stroke="#000" stroke-width="2"/><text x="13" y="22">90</text><text x="78" y="21" class="red">2800</text><text x="153" y="22">120</text></svg></td>
								<td class="formula"><svg viewBox="0 0 100 40"><circle cx="58" cy="20" r="19" fill="#c3cc0f"/><path d="M3 26q22-2 28 0t18 3" fill="none" stroke="#00e" stroke-width="3"/><path d="M40 28h11M62 28h8M65 22l10 12M70 26l4 7" fill="none" stroke="#000" stroke-width="3"/></svg><span>1400+1400+90+120</span></td>
								<td class="desc">左净长+右净长+弯折+弯折</td><td>3010</td><td>11</td><td>0</td></tr>
							<tr><th>3</th><td class="name">分布筋.1</td><td>1</td>
								<td class="shape"><svg viewBox="0 0 172 36"><path d="M15 24h154" stroke="#000" stroke-width="2"/><text x="83" y="21" class="red">1040</text></svg></td>
								<td>990-100+150</td><td class="desc">净长-起步+搭接</td><td>1040</td><td>6</td><td>0</td></tr>
						</tbody>
					</table>
				</div>
				<div class="vbar"><i></i></div>
				<div class="hbar"><i></i></div>
			</div>
		</section>
	</div>
</main>

<div class="dialog" role="dialog" aria-label="钢筋显示控制面板">
	<h3>钢筋显示控制面板</h3>
	<div class="opts">
		<label><input type="checkbox" checked>板负筋</label>
		<label><input type="checkbox">分布筋</label>
		<label><input type="checkbox" checked>显示其它图元</label>
		<label><input type="checkbox" checked>显示详细公式</label>
	</div>
</div>

<footer class="status">
	<span class="s-xyz">X = 5047 Y = 13619 Z = -50</span>
	<span class="s-floor">层高：3.25</span>
	<span class="s-level">标高：-0.05~3.2</span>
	<span class="s-count">1(11)</span>
	<span class="s-hide">隐藏： 0</span>
	<div class="modes">
		<button aria-label="正交"><svg viewBox="0 0 14 14"><path d="M3 2v10h9M3 8h4v4" fill="none" stroke="#444"/></svg></button>
		<button aria-label="框选" class="drop on"><svg viewBox="0 0 14 14"><path d="M3 3h10v10H3z" fill="none" stroke="#3b78c2"/><path d="M1 1h5v5H1z" fill="#ec7a4a"/></svg></button>
		<button aria-label="交点"><svg viewBox="0 0 14 14"><path d="M2 2l10 10M12 2L2 12" stroke="#888"/></svg></button>
		<button aria-label="角度" class="drop"><svg viewBox="0 0 14 14"><path d="M12 2L2 12h11" fill="none" stroke="#444"/><path d="M6 7l3 4" stroke="#444"/></svg></button>
		<button aria-label="输入" class="drop"><svg viewBox="0 0 14 14"><path d="M3 1v6M0 4h6" stroke="#333"/><path d="M6 8h8v4H6z" fill="#333"/></svg></button>
		<button>跨图层选择</button>
		<button>折线选择</button>
	</div>
	<span class="tip">按鼠标左键指定第一个角点，或拾取构件图元</span>
	<span class="fps">111.111 FPS</span>
</footer>

<div class="taskbar">
	<svg class="orb" viewBox="0 0 46 11"><ellipse cx="22" cy="13" rx="13" ry="12" fill="#5b7690" stroke="#a9b9c8"/><path d="M15 9q4-3 7-1v3h-8z" fill="#d35f2c"/><path d="M24 8q4 2 6 0v3h-6z" fill="#86b34a"/></svg>
	<button aria-label="PDF"><svg viewBox="0 0 24 11"><path d="M1 2h22v9H1z" fill="#d9000d"/><path d="M14 4h-2v5h2" fill="none" stroke="#fff" stroke-width="2"/></svg></button>
	<button aria-label="文档"><svg viewBox="0 0 24 11"><path d="M4 3h16v8H4z" fill="#f7f7f0" stroke="#6a8bb0"/><path d="M7 6h8v5H7z" fill="#e6b95a"/></svg></button>
	<button aria-label="云"><svg viewBox="0 0 24 11"><path d="M0 11V5q0-3 3-3h18q3 0 3 3v6z" fill="#5aa3ee"/><path d="M5 11q0-4 7-4t7 4z" fill="#fff"/></svg></button>
	<button aria-label="算量"><svg viewBox="0 0 24 11"><path d="M1 3h22v8H1z" fill="#1767c5"/><circle cx="12" cy="10" r="4" fill="#1ec6f4"/></svg></button>
	<button aria-label="浏览器"><svg viewBox="0 0 24 11"><path d="M1 11Q3 3 12 3t11 8z" fill="#6cc63c"/><path d="M3 9Q14 1 21 2" fill="none" stroke="#e3f3a0" stroke-width="2"/></svg></button>
	<button aria-label="录像"><svg viewBox="0 0 24 11"><circle cx="8" cy="7" r="5" fill="#333"/><circle cx="16" cy="10" r="5" fill="#555"/><circle cx="8" cy="7" r="2" fill="#aaa"/></svg></button>
	<div class="tray">
		<svg viewBox="0 0 120 11"><circle cx="34" cy="11" r="4" fill="#2b5fb0"/><path d="M47 11V5h5v3" fill="none" stroke="#fff"/><path d="M80 11q3-4 6 0z" fill="#9ccf3c"/><path d="M112 10h6" stroke="#fff"/></svg>
		<time>15:45</time><i></i>
	</div>
</div>

<div class="paint">
	<div class="brushes">
		<button aria-label="退出"><svg viewBox="0 0 14 14"><path d="M1 2h5v10H1zM3 12l3 1V4M7 7h6M10 4v6" fill="none" stroke="#0d3"/></svg></button>
		<button aria-label="波形"><svg viewBox="0 0 14 14"><path d="M1 2h12v10H1zM3 5l2 5 2-5 2 5 2-5" fill="none" stroke="#0d3"/></svg></button>
		<button aria-label="上移"><svg viewBox="0 0 14 14"><path d="M7 1l6 6h-4v6H5V7H1z" fill="none" stroke="#0d3" stroke-width="1.300"/></svg></button>
		<button aria-label="清除"><svg viewBox="0 0 14 14"><path d="M1 1l11 12M13 1L2 13" stroke="#0d3" stroke-width="1.300"/></svg></button>
		<button aria-label="保存"><svg viewBox="0 0 14 14"><path d="M1 1h12v12H1zM4 1v5h6V1M3 13V9h8v4" fill="none" stroke="#0d3" stroke-width="1.300"/></svg></button>
		<button aria-label="打开"><svg viewBox="0 0 14 14"><path d="M1 12V4h4l1 2h5v6z" fill="#b5371c"/><path d="M1 12l3-5h9l-3 5zM8 2h4v4" fill="none" stroke="#0d3"/></svg></button>
		<i></i>
		<button aria-label="橡皮"><svg viewBox="0 0 14 14"><path d="M6 2h7L8 11H1z" fill="#e33a20"/><path d="M6 2L1 11l3 1L9 3z" fill="#7c5"/></svg></button>
		<button aria-label="画笔" class="on"><svg viewBox="0 0 14 14"><path d="M10 1l3 3-8 8-3 1 0-3z" fill="#1fc06a"/><path d="M9 3l2 2" stroke="#066"/></svg></button>
		<button aria-label="填充"><svg viewBox="0 0 14 14"><path d="M7 2l5 5-4 5-5-4z" fill="#2aa08c"/><path d="M1 6q2 0 2 6" fill="none" stroke="#d33" stroke-width="2"/></svg></button>
		<button aria-label="直线"><svg viewBox="0 0 14 14"><path d="M2 2l10 10" stroke="#0d3"/></svg></button>
		<button aria-label="箭头"><svg viewBox="0 0 14 14"><path d="M2 2l10 10M2 7V2h5" fill="none" stroke="#0d3"/></svg></button>
		<button aria-label="矩形"><svg viewBox="0 0 14 14"><path d="M2 3h10v9H2z" fill="none" stroke="#0d3"/></svg></button>
		<button aria-label="圆"><svg viewBox="0 0 14 14"><circle cx="7" cy="7" r="5.500" fill="none" stroke="#0d3"/></svg></button>
		<button aria-label="实心矩形"><svg viewBox="0 0 14 14"><path d="M2 3h10v9H2z" fill="#0f1"/></svg></button>
		<button aria-label="实心圆"><svg viewBox="0 0 14 14"><circle cx="7" cy="7" r="5.500" fill="#0f1"/></svg></button>
		<button aria-label="文字"><svg viewBox="0 0 14 14"><path d="M2 13L7 1l5 12M4 9h6M0 13h4M10 13h4" fill="none" stroke="#0f1" stroke-width="1.800"/></svg></button>
		<i></i>
	</div>
	<select class="font" aria-label="字体"><option>宋体</option></select>
	<select class="size" aria-label="粗细"><option>4</option></select>
	<button class="color" aria-label="颜色"><i></i><b></b></button>
	<a href="#">http://www.3000soft.net</a>
</div>
</body>
</html>
```
FILE: styles.css
```css
:root {
	--blue: #4b9df2;
	--line: #c4c7cb;
	--pick: #c7d7f0;
	--gray: #efeff0;
	--green: #ccffd9;
}
* {
	box-sizing: border-box;
}
body {
	margin: 0;
	height: 100vh;
	display: flex;
	flex-direction: column;
	overflow: hidden;
	position: relative;
	background: #e6e8eb;
	color: #222;
	font: 10px/14px "Open Sans", "Noto Sans CJK SC", sans-serif;
}
button, input, select {
	font: inherit;
	color: inherit;
	margin: 0;
	padding: 0;
	border: 0;
	background: none;
	border-radius: 0;
}
button {
	display: flex;
	align-items: center;
	white-space: nowrap;
}
ul {
	list-style: none;
	margin: 0;
	padding: 0;
}
h1, h2, h3, p {
	margin: 0;
	font-size: 10px;
	font-weight: 400;
}
a {
	color: inherit;
	text-decoration: none;
}
svg {
	display: block;
	flex: none;
}
.sprite {
	position: absolute;
	width: 0;
	height: 0;
}
.drop::after {
	content: "";
	border: 3px solid transparent;
	border-top-color: #555;
	border-bottom: 0;
	margin-left: 5px;
}
.drop.dis::after {
	border-top-color: #bbb;
}
.dis {
	color: #aaa;
}

/* title and menu */
.top {
	display: flex;
	height: 32px;
	background: #fff;
	position: relative;
}
.logo {
	width: 37px;
	border-right: 1px solid #ddd;
}
.logo svg {
	width: 36px;
	height: 32px;
}
.topmain {
	flex: 1;
	display: flex;
	flex-direction: column;
}
.titlerow {
	display: flex;
	height: 17px;
	align-items: center;
}
.quick {
	display: flex;
	align-items: center;
	width: 375px;
	padding-left: 3px;
}
.quick button {
	height: 15px;
	padding: 0 3px;
}
.quick svg {
	width: 12px;
	height: 12px;
}
.quick .drop::after {
	border-width: 2px;
	border-bottom: 0;
	margin-left: 4px;
}
.quick .on {
	background: #c3dafa;
}
h1 {
	flex: 1;
	white-space: nowrap;
}
.winbtns {
	display: flex;
	gap: 18px;
	padding-right: 11px;
}
.winbtns svg {
	width: 10px;
	height: 10px;
}
.tabrow {
	display: flex;
	flex: 1;
	justify-content: space-between;
}
.menu {
	display: flex;
	padding-left: 3px;
}
.menu a {
	padding: 0 10px;
	line-height: 15px;
	color: #444;
}
.menu a.active {
	background: var(--blue);
	color: #fff;
}
.helpers {
	display: flex;
	align-items: center;
	gap: 4px;
	padding-right: 4px;
}
.helpers svg {
	width: 14px;
	height: 14px;
}
.help {
	font-size: 12px;
	padding-right: 22px;
	color: #777;
}
.help.drop::after {
	border-width: 2px;
	border-bottom: 0;
	margin-left: 3px;
}
.search {
	width: 136px;
	height: 13px;
	padding-left: 20px;
	border: 1px solid #bbb;
}
.edge {
	position: absolute;
	top: 0;
	left: 799px;
	right: 65px;
	height: 2px;
	background: #111;
}
.mark {
	position: absolute;
	right: 8px;
	top: 10px;
	display: flex;
	align-items: center;
	gap: 6px;
	z-index: 2;
	font-size: 24px;
	line-height: 34px;
	font-weight: 700;
	color: #f6f6f6;
	text-shadow: 1px 1px 1px #aaa, -1px 0 1px #ccc;
	pointer-events: none;
}
.mark svg {
	width: 42px;
	height: 44px;
}

/* ribbon */
.ribbon {
	display: flex;
	height: 79px;
	padding-top: 3px;
	background: linear-gradient(#fff, #fbfbfc 50%, #e7eaed);
	border-top: 1px solid #ddd;
	border-bottom: 2px solid #a9acb1;
}
.group {
	flex: none;
	border-right: 1px solid #d6d8da;
	display: flex;
	flex-direction: column;
}
.group .body {
	display: flex;
	height: 55px;
}
.group p {
	display: flex;
	align-items: center;
	justify-content: center;
	height: 18px;
}
.tools {
	display: grid;
	grid-template-rows: repeat(3, 1fr);
	grid-auto-flow: column;
	flex: 1;
	padding-left: 7px;
}
.tools svg {
	width: 13px;
	height: 13px;
	margin-right: 2px;
}
.tools .drop::after {
	border-width: 2px;
	border-bottom: 0;
	margin-left: 4px;
}
.big {
	flex-direction: column;
	line-height: 13px;
	padding-top: 3px;
}
.big svg {
	width: 24px;
	height: 24px;
	margin-bottom: 3px;
}
.g-select { width: 117px; }
.g-cad { width: 73px; }
.g-common { width: 220px; }
.g-modify { width: 189px; }
.g-draw { width: 96px; }
.g-recog { width: 103px; }
.g-edit { width: 219px; }
.g-select .big {
	width: 34px;
	padding-left: 9px;
}
.g-common .tools {
	grid-template-columns: 53px 88px 1fr;
}
.g-modify .tools {
	grid-template-columns: 44px 43px 43px 1fr;
}
.g-draw .big {
	width: 33px;
}
.g-draw .body {
	padding-left: 5px;
}
.g-recog .big {
	width: 47px;
}
.g-recog .body {
	padding-left: 5px;
}
.g-edit .big {
	width: 47px;
	margin-left: 3px;
}
.g-edit .tools {
	padding-left: 3px;
	grid-template-columns: 82px 1fr;
}
.g-recog p, .g-edit p {
	padding-top: 3px;
}

.selectors {
	display: flex;
	gap: 4px;
	height: 23px;
	padding: 2px;
	background: #c8cbd0;
	border-bottom: 1px solid #a9acb1;
}
.selectors select {
	width: 80px;
	height: 18px;
	padding-left: 4px;
	border: 1px solid #b0b3b8;
	appearance: none;
	background: linear-gradient(#444, #444) right 3px top 7px / 5px 1px no-repeat, linear-gradient(#444, #444) right 4px top 8px / 3px 1px no-repeat, linear-gradient(#444, #444) right 5px top 9px / 1px 1px no-repeat, #fff;
}

/* work area */
.work {
	flex: 1;
	display: flex;
	min-height: 0;
}
.nav {
	width: 136px;
	margin-right: 3px;
	background: #fff;
	border: 1px solid var(--line);
	border-top: 0;
}
.navhead {
	display: flex;
	align-items: center;
	gap: 4px;
	height: 23px;
	padding: 0 1px 0 4px;
	background: var(--gray);
	border-bottom: 1px solid var(--line);
}
.navhead button {
	width: 20px;
	height: 19px;
	border: 1px solid #6fadf0;
	border-radius: 3px;
	background: #e3f0fe;
	justify-content: center;
}
.navhead button svg {
	width: 13px;
	height: 13px;
}
.plus {
	width: 11px;
	height: 11px;
	margin-right: auto;
}
.types {
	padding-top: 2px;
}
.types li {
	display: flex;
	align-items: center;
	gap: 4px;
	height: 19px;
	padding-left: 3px;
}
.types > li > svg {
	width: 12px;
	height: 11px;
}
.types .sub {
	height: auto;
	padding: 1px 0;
}
.sub ul {
	flex: 1;
	padding-left: 16px;
}
.sub li {
	gap: 6px;
}
.sub svg {
	width: 12px;
	height: 12px;
}
.current {
	background: var(--pick);
}
.middle {
	width: 271px;
	display: flex;
	flex-direction: column;
	gap: 4px;
}
.panel {
	background: #fff;
	border: 1px solid var(--line);
	display: flex;
	flex-direction: column;
}
.list {
	height: 249px;
	border-top: 0;
}
.layers {
	flex: 1;
}
.grip {
	height: 9px;
	background: #d3d5d9;
	display: flex;
	justify-content: flex-end;
}
.grip button {
	padding-right: 3px;
	font-size: 11px;
	line-height: 9px;
	color: #777;
}
.tabs {
	display: flex;
	height: 18px;
	background: var(--gray);
	border-bottom: 1px solid var(--line);
}
.tabs button {
	width: 52px;
	justify-content: center;
	background: #dfe0e2;
	color: #888;
	border-right: 1px solid var(--line);
}
.tabs .active {
	background: #f4f4f4;
	color: #222;
	font-weight: 600;
}
.bar {
	display: flex;
	align-items: center;
	gap: 11px;
	height: 24px;
	padding-left: 3px;
	background: var(--gray);
	overflow: hidden;
	color: #333;
}
.bar svg {
	width: 13px;
	height: 13px;
}
.bar button {
	gap: 2px;
}
.bar .drop::after {
	border-width: 2px;
	border-bottom: 0;
}
.bar.text {
	height: 22px;
}
.find {
	height: 16px;
	padding-left: 1px;
	border-top: 1px solid var(--line);
	border-bottom: 1px solid var(--line);
}
.find::placeholder, .search::placeholder {
	color: #888;
	opacity: 1;
}
.tree {
	line-height: 17px;
	padding-left: 7px;
}
.tree svg {
	display: inline-block;
	width: 7px;
	height: 7px;
	margin-right: 5px;
}
.tree ul {
	padding-left: 25px;
}
.tree ul li {
	width: max-content;
	padding: 0 8px 0 3px;
}
table {
	border-collapse: collapse;
	table-layout: fixed;
}
th {
	font-weight: 400;
}
td, th {
	padding: 0;
}
.layerbox {
	background: linear-gradient(var(--gray) 16px, #fff 16px);
	border-top: 1px solid var(--line);
}
.layerbox table {
	width: 191px;
}
.layerbox tr {
	height: 17px;
}
.layerbox thead tr {
	height: 16px;
}
.layerbox th, .layerbox td {
	border: 1px solid var(--line);
	border-left: 0;
	border-top: 0;
}
.layerbox td svg {
	width: 8px;
	height: 8px;
	margin: auto;
}
.layerbox td:last-child {
	padding-left: 3px;
}
.c-on { width: 41px; }
.c-col { width: 29px; }
input[type=checkbox] {
	appearance: none;
	display: block;
	width: 11px;
	height: 11px;
	border: 1px solid #777;
	border-radius: 2px;
	background: #fff;
}
td input[type=checkbox] {
	margin: auto;
}
input[type=checkbox]:checked {
	background: var(--blue);
	border-color: var(--blue);
}
input[type=checkbox]:checked::before {
	content: "";
	display: block;
	width: 6px;
	height: 3px;
	margin: 2px 1px;
	border: solid #fff;
	border-width: 0 0 2px 2px;
	transform: rotate(-45deg);
}
.vsplit {
	width: 3px;
	display: flex;
	flex-direction: column;
	padding-top: 133px;
}
.vsplit i {
	height: 71px;
	background: #59626f;
}
.right {
	flex: 1;
	min-width: 0;
	display: flex;
	flex-direction: column;
}
.cad {
	width: 100%;
	flex: 1;
	min-height: 0;
}
.cadtext {
	font: 400 39px "Noto Sans CJK SC", sans-serif;
	fill: #fff;
}
.tag {
	font: 13px "Noto Sans", sans-serif;
	fill: #fff;
}
.axis {
	font: 12px "Noto Sans", sans-serif;
}
.hsplit {
	height: 3px;
	background: #fff;
	display: flex;
	justify-content: center;
}
.hsplit i {
	width: 80px;
	background: #59626f;
}
.rebar {
	background: var(--gray);
	height: 200px;
	flex: none;
	border-right: 0;
}
.rebar h2 {
	height: 16px;
	padding-left: 6px;
	line-height: 15px;
	color: #666;
	border-bottom: 1px solid var(--line);
}
.rebar .bar {
	height: 24px;
	margin: 8px 7px 0 6px;
	padding-left: 5px;
}
.step {
	display: flex;
	gap: 5px;
}
.sheet {
	display: grid;
	grid-template-columns: 1fr 15px;
	grid-template-rows: 119px 14px;
	margin: 0 7px 0 6px;
	border: 1px solid #999ca0;
	background: #fff;
}
.rows {
	overflow: hidden;
}
.rows table {
	width: 100%;
}
.rows thead {
	height: 16px;
	background: var(--gray);
}
.rows tbody tr {
	height: 37px;
	background: var(--green);
}
.rows th, .rows td {
	border: 1px solid #b5bdb8;
	border-top: 0;
	border-left: 0;
}
.rows tbody th {
	background: var(--gray);
}
.rows .hot {
	background: #ffeeb3;
	border: 1px solid #6fadd8;
	font-weight: 700;
}
.rows td {
	font: 8px/10px "Liberation Mono", "Noto Sans CJK SC", monospace;
	color: #000;
	padding-left: 2px;
}
.rows td.name, .rows td.desc {
	font-size: 9px;
	word-break: break-all;
}
.rows td.shape {
	padding: 0;
}
.shape svg {
	width: 172px;
	height: 36px;
}
.shape text {
	font: 11px "Liberation Serif", serif;
}
.shape .red {
	fill: #c8302a;
}
.rows .sel th {
	background: #ffeeb3;
	font-weight: 700;
}
.rows td.formula {
	position: relative;
	background: #c0d0ef;
	font: 10px/14px "Open Sans", sans-serif;
}
.formula svg {
	position: absolute;
	left: 0;
	top: -2px;
	width: 100px;
	height: 40px;
}
.formula span {
	position: relative;
}
.r-no { width: 6px; }
.r-id { width: 58px; }
.r-pic { width: 26px; }
.r-shape { width: 173px; }
.r-desc { width: 48px; }
.r-len { width: 31px; }
.r-cnt { width: 71px; }
.r-lap { width: 33px; }
.vbar {
	padding: 10px 5px 0 3px;
}
.vbar i {
	display: block;
	height: 76px;
	border-radius: 3px;
	background: #c9c9c9;
}
.hbar {
	padding: 4px 146px 0 102px;
}
.hbar i {
	display: block;
	height: 6px;
	border-radius: 3px;
	background: #c9c9c9;
}

.dialog {
	position: absolute;
	left: 382px;
	top: 136px;
	width: 130px;
	padding-bottom: 9px;
	background: #f0f0f0;
	border: 1px solid #c5c8cc;
}
.dialog h3 {
	margin: -1px -1px 0;
	padding-left: 7px;
	line-height: 22px;
	background: #2b80e0;
	color: #fff;
}
.opts {
	margin: 16px 9px 0;
	padding: 5px 8px;
	background: #fff;
	border: 1px solid #cfd1d4;
	border-radius: 3px;
}
.opts label {
	display: flex;
	align-items: center;
	gap: 6px;
	height: 18px;
}

/* bottom bars */
.status {
	display: flex;
	align-items: center;
	height: 25px;
	padding: 0 10px 0 2px;
	background: #dfe0e3;
	border-bottom: 1px solid #555a60;
	white-space: nowrap;
	color: #333;
}
.s-xyz { width: 165px; }
.s-floor { width: 64px; }
.s-level { width: 106px; }
.s-count { width: 82px; }
.s-hide { width: 64px; }
.modes {
	display: flex;
	gap: 2px;
}
.modes button {
	height: 20px;
	padding: 0 3px;
	border: 1px solid #acafb4;
	background: #d5d6d9;
}
.modes svg {
	width: 13px;
	height: 14px;
}
.modes button.on {
	background: #fff;
	border-color: #5aa0e0;
}
.modes .drop::after {
	border-width: 2px;
	border-bottom: 0;
	margin-left: 4px;
}
.tip {
	margin-left: 3px;
}
.fps {
	margin-left: auto;
}
.taskbar {
	display: flex;
	gap: 2px;
	height: 11px;
	overflow: hidden;
	background: linear-gradient(90deg, #8598ab, #a4bedb 30%, #a6c1de 74%, #75889d 78%, #8496a9);
}
.orb {
	width: 46px;
	height: 11px;
}
.taskbar button {
	width: 48px;
	border: 1px solid #6f8093;
	border-bottom: 0;
	background: #c7d5e5;
	justify-content: center;
}
.taskbar button svg {
	width: 24px;
	height: 11px;
}
.tray {
	margin-left: auto;
	display: flex;
	color: #fff;
	gap: 96px;
}
.tray svg {
	width: 120px;
	height: 11px;
}
.tray i {
	width: 12px;
	margin-left: -80px;
	border-left: 1px solid #4d5a68;
	background: #93a2b2;
}
.paint {
	display: flex;
	align-items: center;
	height: 20px;
	background: #000;
	gap: 6px;
	color: #0f1;
}
.brushes {
	display: flex;
	align-items: center;
	gap: 2px;
}
.brushes button {
	width: 16px;
	height: 17px;
	justify-content: center;
}
.brushes svg {
	width: 12px;
	height: 12px;
}
.brushes .on {
	outline: 1px solid #e01010;
}
.brushes > i {
	width: 2px;
	height: 14px;
	margin: 0 2px;
	background: #ddd;
}
.paint select {
	height: 16px;
	padding-left: 2px;
	appearance: none;
	border: 1px solid #bbb;
	color: #ddd;
	background: linear-gradient(#ddd, #ddd) right 5px top 8px / 1px 1px no-repeat, linear-gradient(#ddd, #ddd) right 4px top 7px / 3px 1px no-repeat, linear-gradient(#ddd, #ddd) right 3px top 6px / 5px 1px no-repeat, linear-gradient(#ddd, #ddd) right 2px top 5px / 7px 1px no-repeat, linear-gradient(#bbb, #bbb) right 13px top 0 / 1px 14px no-repeat, #000;
}
.paint .font {
	width: 96px;
}
.paint .size {
	width: 40px;
	color: #0f1;
	font-size: 8px;
	border-color: #0b0;
	background: linear-gradient(#0f1, #0f1) right 5px top 8px / 1px 1px no-repeat, linear-gradient(#0f1, #0f1) right 4px top 7px / 3px 1px no-repeat, linear-gradient(#0f1, #0f1) right 3px top 6px / 5px 1px no-repeat, linear-gradient(#0f1, #0f1) right 2px top 5px / 7px 1px no-repeat, linear-gradient(#0b0, #0b0) right 13px top 0 / 1px 14px no-repeat, #000;
}
.color {
	width: 52px;
	height: 16px;
	padding: 1px;
	border: 1px solid #0b0;
	justify-content: space-between;
}
.color i {
	width: 33px;
	height: 11px;
	border: 1px solid #ddd;
	background: #00f;
}
.color b {
	border: 4px solid transparent;
	border-top-color: #0f1;
	border-bottom: 0;
	margin-right: 3px;
}
.paint a {
	margin-left: auto;
	font: 8px/12px "Liberation Mono", monospace;
}
```
